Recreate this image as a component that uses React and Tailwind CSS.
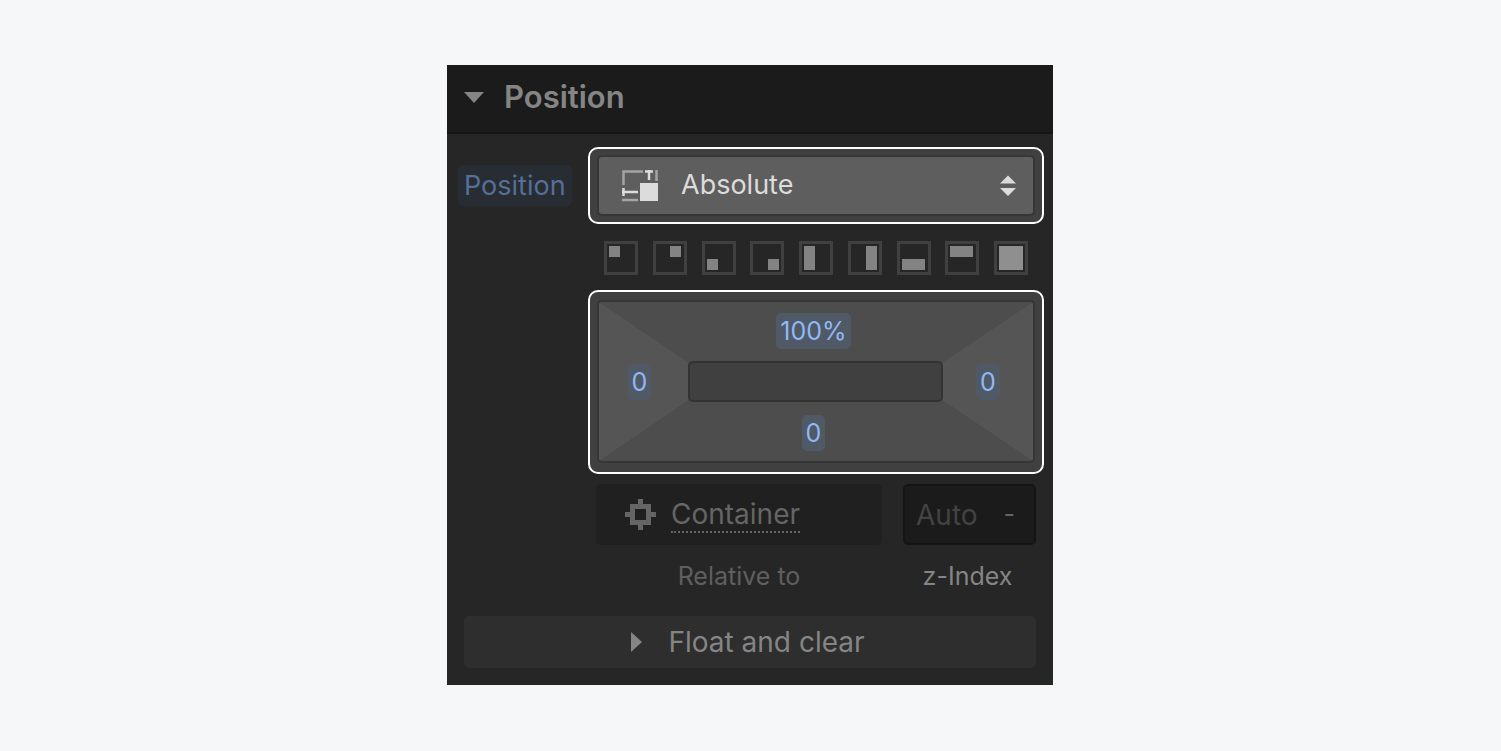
import { useState } from "react";

const PINS = [
  { name: "Top left", x: 5, y: 5, w: 11, h: 11 },
  { name: "Top right", x: 17, y: 5, w: 11, h: 11 },
  { name: "Bottom left", x: 5, y: 18, w: 11, h: 11 },
  { name: "Bottom right", x: 18, y: 18, w: 11, h: 11 },
  { name: "Left", x: 5, y: 5, w: 11, h: 24 },
  { name: "Right", x: 18, y: 5, w: 11, h: 24 },
  { name: "Bottom", x: 5, y: 18, w: 23, h: 11 },
  { name: "Top", x: 5, y: 5, w: 23, h: 11 },
  { name: "Full", x: 5, y: 5, w: 24, h: 24 },
];

const AbsoluteIcon = () => (
  <svg width="38" height="32" viewBox="0 0 38 32" aria-hidden="true">
    <path d="M1.5 15V1.5H21M34.5 0v11M0 30H16" fill="none" stroke="#a4a4a4" strokeWidth="2.5" />
    <path d="M23 1.5h8M27 0v10M1.5 18v8M0 22h16" fill="none" stroke="#dcdcdc" strokeWidth="2.5" />
    <rect x="18" y="13" width="18" height="18" fill="#dcdcdc" />
  </svg>
);

const ContainerIcon = () => (
  <svg width="31" height="31" viewBox="0 0 31 31" aria-hidden="true">
    <path
      d="M13 0h5v5h8v8h5v5h-5v8h-8v5h-5v-5H5v-8H0v-5h5V5h8zM10 10v11h11V10z"
      fill="#656565"
      fillRule="evenodd"
    />
  </svg>
);

const OffsetValue = ({ side, children }) => (
  <button
    aria-label={`${side} offset ${children}`}
    className="h-9 rounded-[5px] bg-[#505966] px-1 text-[25px] leading-9 text-[#8fb8f5]"
  >
    {children}
  </button>
);

const Highlight = ({ children }) => (
  <div className="rounded-[10px] border-2 border-white bg-[#404040] px-[7px]">{children}</div>
);

export default function App() {
  const [open, setOpen] = useState(true);
  const [position, setPosition] = useState("absolute");
  const [zIndex, setZIndex] = useState("Auto");

  return (
    <main className="flex min-h-screen items-start justify-center bg-[#f6f7f9] py-[65px] pr-px font-['Inter',sans-serif]">
      <section className="w-full max-w-[606px] bg-[#262626]">
        <h2 className="border-b-2 border-[#151515] bg-[#1b1b1b]">
          <button
            onClick={() => setOpen(!open)}
            aria-expanded={open}
            className="flex h-[67px] w-full items-center gap-5 pb-0.5 pl-[17px] text-[31px] font-semibold text-[#858585]"
          >
            <svg width="20" height="11" viewBox="0 0 20 11" aria-hidden="true">
              <path d="M0 0h20L10 11z" fill="#858585" />
            </svg>
            Position
          </button>
        </h2>

        {open && (
          <div className="pt-[13px] pb-[17px]">
            <div className="flex justify-between pr-[9px] pl-[11px]">
              <label
                htmlFor="position"
                className="mt-[18px] h-[41px] self-start rounded-[5px] bg-[#282c33] px-[6px] text-[27px] leading-[42px] text-[#566f97]"
              >
                Position
              </label>

              <div className="w-[456px]">
                <Highlight>
                  <div className="relative py-[6px]">
                    <select
                      id="position"
                      value={position}
                      onChange={(e) => setPosition(e.target.value)}
                      className="block h-[61px] w-full appearance-none rounded-[5px] border-2 border-[#363636] bg-[#5e5e5e] pl-[82px] text-[27px] text-[#dcdcdc]"
                    >
                      <option value="static">Static</option>
                      <option value="relative">Relative</option>
                      <option value="absolute">Absolute</option>
                      <option value="fixed">Fixed</option>
                      <option value="sticky">Sticky</option>
                    </select>
                    <span className="pointer-events-none absolute inset-0 flex items-center justify-between pr-[19px] pl-[25px]">
                      <AbsoluteIcon />
                      <svg width="16" height="22" viewBox="0 0 16 22" aria-hidden="true">
                        <path d="M0 8.500L8 0.500L16 8.500zM0 13L8 21L16 13z" fill="#dcdcdc" />
                      </svg>
                    </span>
                  </div>
                </Highlight>

                <div className="mt-[17px] mb-[15px] flex justify-between px-4">
                  {PINS.map((pin) => (
                    <button key={pin.name} aria-label={pin.name}>
                      <svg width="34" height="34" viewBox="0 0 34 34" className="block">
                        <rect x="1.5" y="1.5" width="31" height="31" fill="none" stroke="#404040" strokeWidth="3" />
                        <rect
                          x={pin.x}
                          y={pin.y}
                          width={pin.w}
                          height={pin.h}
                          fill={pin.name === "Full" ? "#8f8f8f" : "#838383"}
                        />
                      </svg>
                    </button>
                  ))}
                </div>

                <Highlight>
                  <div className="pt-2 pb-[9px]">
                    <div className="grid h-[163px] grid-cols-[89px_1fr_90px] grid-rows-[59px_1fr_59px] overflow-hidden rounded-[5px] border-2 border-[#363636] bg-[#4d4d4d]">
                      <div className="row-span-3 flex items-center justify-center bg-[#555555] pr-2 [clip-path:polygon(0_0,100%_38%,100%_62%,0_100%)]">
                        <OffsetValue side="Left">0</OffsetValue>
                      </div>
                      <div className="flex items-center justify-center pr-1 pb-0.5">
                        <OffsetValue side="Top">100%</OffsetValue>
                      </div>
                      <div className="row-span-3 flex items-center justify-center bg-[#555555] [clip-path:polygon(100%_0,0_38%,0_62%,100%_100%)]">
                        <OffsetValue side="Right">0</OffsetValue>
                      </div>
                      <div className="rounded-[5px] border-2 border-[#333333] bg-[#404040]" />
                      <div className="flex items-center justify-center pt-0.5 pr-1">
                        <OffsetValue side="Bottom">0</OffsetValue>
                      </div>
                    </div>
                  </div>
                </Highlight>

                <div className="mt-[10px] grid grid-cols-[1fr_133px] gap-x-[21px] gap-y-[15px] px-2">
                  <button
                    aria-describedby="relative-to"
                    className="flex h-[61px] items-center gap-[15px] rounded-[5px] bg-[#202020] pl-[29px] text-[28px] text-[#656565]"
                  >
                    <ContainerIcon />
                    <span className="border-b-2 border-dotted border-[#656565] leading-[34px]">Container</span>
                  </button>
                  <div className="flex h-[61px] items-center justify-between rounded-[5px] border-2 border-[#151515] bg-[#1b1b1b] pr-[19px] pl-[11px] text-[28px]">
                    <input
                      id="z-index"
                      value={zIndex}
                      onChange={(e) => setZIndex(e.target.value)}
                      className="w-[70px] bg-transparent text-[#434343] outline-none"
                    />
                    <button aria-label="Unit" className="text-[25px] text-[#656565]">
                      -
                    </button>
                  </div>
                  <span id="relative-to" className="text-center text-[25px] leading-8 text-[#5f5f5f]">
                    Relative to
                  </span>
                  <label htmlFor="z-index" className="pr-1 text-center text-[25px] leading-8 text-[#858585]">
                    z-Index
                  </label>
                </div>
              </div>
            </div>

            <div className="mt-6 px-[17px]">
              <button className="flex h-[52px] w-full items-center justify-center gap-[26px] rounded-[5px] bg-[#2e2e2e] pr-1 text-[28px] text-[#858585]">
                <svg width="11" height="20" viewBox="0 0 11 20" aria-hidden="true">
                  <path d="M0 0v20L11 10z" fill="#858585" />
                </svg>
                Float and clear
              </button>
            </div>
          </div>
        )}
      </section>
    </main>
  );
}
